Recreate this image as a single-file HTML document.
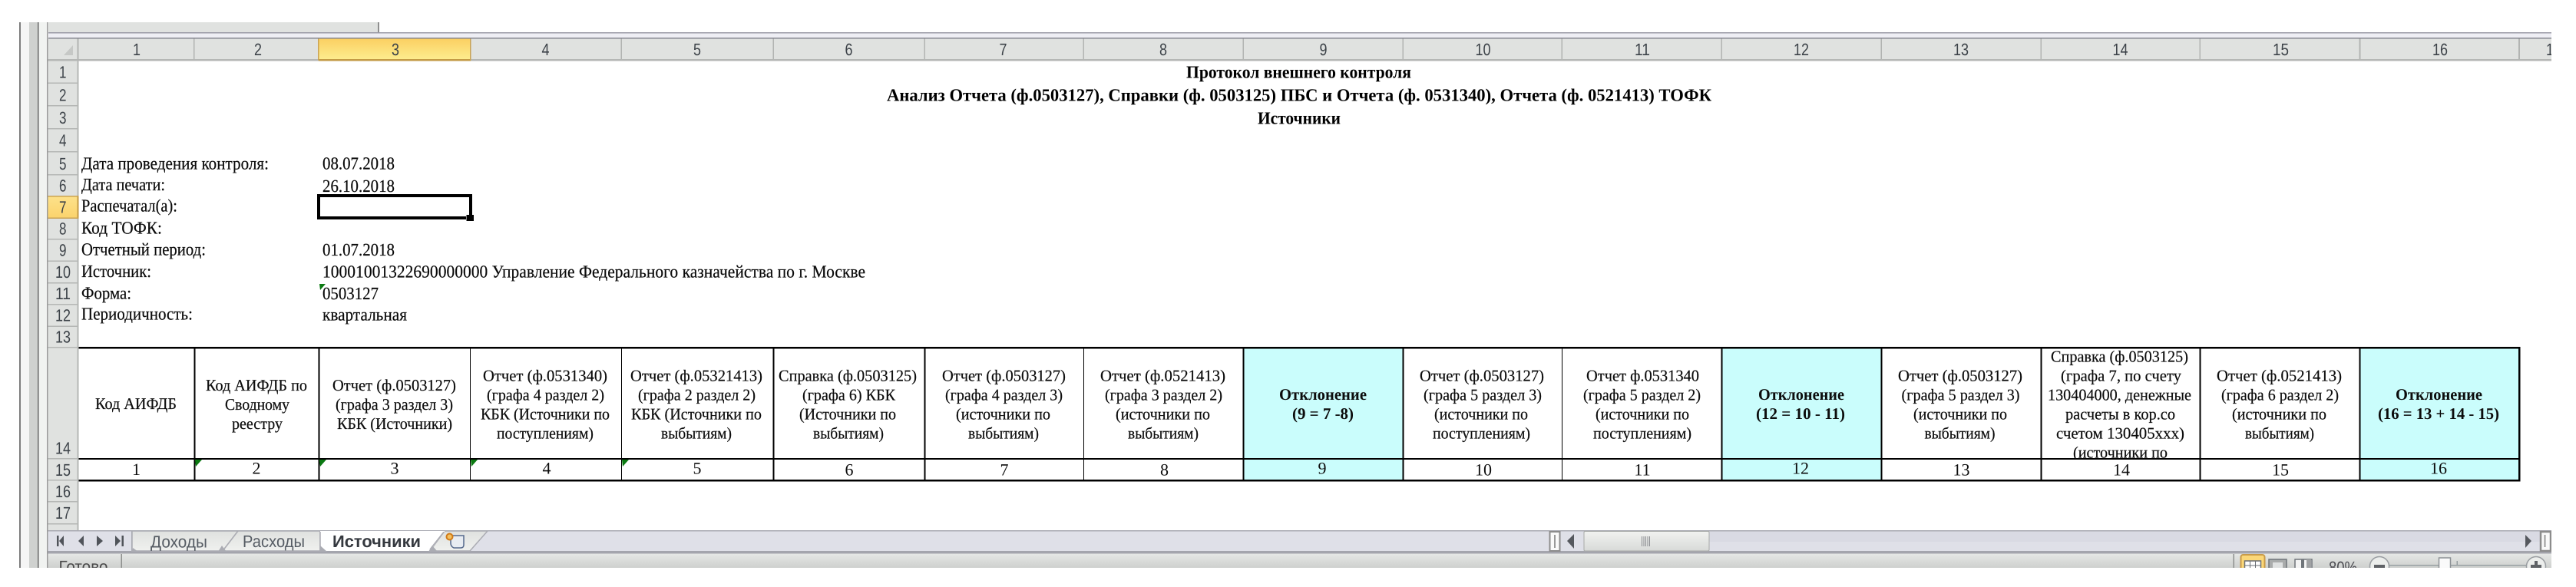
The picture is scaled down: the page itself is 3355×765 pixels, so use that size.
<!DOCTYPE html>
<html lang="ru"><head><meta charset="utf-8"><title>Источники</title>
<style>
html,body{margin:0;padding:0;background:#fff;width:3355px;height:765px;overflow:hidden}
svg{display:block;text-rendering:geometricPrecision}
.s{font-family:"Liberation Serif",serif;font-size:23px;fill:#0a0a0a;stroke:#0a0a0a;stroke-width:.2px}
.c{font-family:"Liberation Serif",serif;font-size:21px;fill:#0c0c0c;stroke:#0c0c0c;stroke-width:.2px}
.cb{font-family:"Liberation Serif",serif;font-size:21px;font-weight:bold;fill:#0c0c0c}
.h{font-family:"Liberation Serif",serif;font-size:23px;font-weight:bold;fill:#000}
.n{font-family:"Liberation Serif",serif;font-size:22px;fill:#0c0c0c;text-anchor:middle}
.d{font-family:"Liberation Sans",sans-serif;font-size:22px;fill:#3c4248}
.u{font-family:"Liberation Sans",sans-serif;font-size:22px;fill:#565c64}
</style></head><body>
<svg width="3355" height="765" viewBox="0 0 3355 765" xmlns="http://www.w3.org/2000/svg">
<defs>
<linearGradient id="act" x1="0" y1="0" x2="0" y2="1"><stop offset="0" stop-color="#fbd062"/><stop offset="1" stop-color="#fdec8e"/></linearGradient>
<linearGradient id="actr" x1="0" y1="0" x2="0" y2="1"><stop offset="0" stop-color="#fde18a"/><stop offset="1" stop-color="#fbd36c"/></linearGradient>
<linearGradient id="st" x1="0" y1="0" x2="0" y2="1"><stop offset="0" stop-color="#e6e8e6"/><stop offset="1" stop-color="#cdcfcd"/></linearGradient>
<linearGradient id="tb" x1="0" y1="0" x2="0" y2="1"><stop offset="0" stop-color="#dfe1df"/><stop offset="1" stop-color="#f0f1ef"/></linearGradient>
<linearGradient id="th" x1="0" y1="0" x2="0" y2="1"><stop offset="0" stop-color="#f1f2f0"/><stop offset="1" stop-color="#d8dad8"/></linearGradient>
<clipPath id="c14"><rect x="2659" y="453" width="205" height="144"/></clipPath>
<clipPath id="app"><rect x="0" y="0" width="3323" height="740"/></clipPath>
</defs>
<rect width="3355" height="765" fill="#fff"/>
<g clip-path="url(#app)">
<!-- left frame -->
<rect x="25" y="29" width="2" height="711" fill="#7d7d7d"/>
<rect x="27" y="29" width="11" height="711" fill="#f5f5f5"/>
<rect x="38" y="29" width="11" height="711" fill="#cfd1cf"/>
<rect x="49" y="29" width="1.5" height="711" fill="#666"/>
<rect x="50.500" y="29" width="10.500" height="711" fill="#f1f3f1"/>
<rect x="61" y="29" width="1.500" height="711" fill="#9a9a9a"/>
<!-- top area -->
<rect x="63" y="29" width="430" height="13" fill="#e0e2e0"/>
<rect x="492" y="29" width="2" height="13" fill="#8e8e8e"/>
<rect x="63" y="42" width="3260" height="1.500" fill="#9a9aa6"/>
<rect x="63" y="43.500" width="3260" height="5.500" fill="#eeeef4"/>
<rect x="63" y="49" width="3260" height="1.500" fill="#85858f"/>
<!-- column header -->
<rect x="62.500" y="50.500" width="3261" height="27" fill="#e0e2e0"/>
<rect x="62.500" y="77" width="3261" height="2.500" fill="#b5b7b5"/>
<rect x="415" y="50.500" width="198" height="27" fill="url(#act)"/>
<rect x="415" y="77" width="198" height="2.500" fill="#c39a45"/>
<rect x="414" y="50.500" width="1.500" height="28" fill="#c9a355"/>
<rect x="612" y="50.500" width="1.500" height="28" fill="#c9a355"/>
<g fill="#b2b4b2">
<rect x="100.500" y="50.500" width="2" height="27"/><rect x="252" y="50.500" width="1.500" height="27"/>
<rect x="808.500" y="50.500" width="1.500" height="27"/><rect x="1006.500" y="50.500" width="1.500" height="27"/><rect x="1203.500" y="50.500" width="1.500" height="27"/>
<rect x="1410.500" y="50.500" width="1.500" height="27"/><rect x="1618.500" y="50.500" width="1.500" height="27"/><rect x="1826.500" y="50.500" width="1.500" height="27"/>
<rect x="2033.500" y="50.500" width="1.500" height="27"/><rect x="2241.500" y="50.500" width="1.500" height="27"/><rect x="2449.500" y="50.500" width="1.500" height="27"/>
<rect x="2657.500" y="50.500" width="1.500" height="27"/><rect x="2864.500" y="50.500" width="1.500" height="27"/><rect x="3072.500" y="50.500" width="2" height="27"/><rect x="3280" y="50.500" width="2" height="27"/>
</g>
<polygon points="95,59 95,72 83,72" fill="#c6c8c6"/>
<g class="d">
<text class="d" x="173" y="72" textLength="10" lengthAdjust="spacingAndGlyphs">1</text>
<text class="d" x="331" y="72" textLength="10" lengthAdjust="spacingAndGlyphs">2</text>
<text class="d" x="510" y="72" textLength="10" lengthAdjust="spacingAndGlyphs">3</text>
<text class="d" x="705.500" y="72" textLength="10" lengthAdjust="spacingAndGlyphs">4</text>
<text class="d" x="903" y="72" textLength="10" lengthAdjust="spacingAndGlyphs">5</text>
<text class="d" x="1100.500" y="72" textLength="10" lengthAdjust="spacingAndGlyphs">6</text>
<text class="d" x="1301.500" y="72" textLength="10" lengthAdjust="spacingAndGlyphs">7</text>
<text class="d" x="1510" y="72" textLength="10" lengthAdjust="spacingAndGlyphs">8</text>
<text class="d" x="1718.500" y="72" textLength="10" lengthAdjust="spacingAndGlyphs">9</text>
<text class="d" x="1921.500" y="72" textLength="20" lengthAdjust="spacingAndGlyphs">10</text>
<text class="d" x="2129" y="72" textLength="20" lengthAdjust="spacingAndGlyphs">11</text>
<text class="d" x="2336" y="72" textLength="20" lengthAdjust="spacingAndGlyphs">12</text>
<text class="d" x="2544" y="72" textLength="20" lengthAdjust="spacingAndGlyphs">13</text>
<text class="d" x="2751.500" y="72" textLength="20" lengthAdjust="spacingAndGlyphs">14</text>
<text class="d" x="2960" y="72" textLength="21" lengthAdjust="spacingAndGlyphs">15</text>
<text class="d" x="3168" y="72" textLength="20" lengthAdjust="spacingAndGlyphs">16</text>
<text class="d" x="3316" y="72" textLength="20" lengthAdjust="spacingAndGlyphs">17</text>
</g>
<!-- row header -->
<rect x="62.500" y="79.500" width="38" height="612" fill="#e0e2e0"/>
<rect x="100.500" y="79.500" width="2" height="612" fill="#b5b7b5"/>
<rect x="62.500" y="256" width="39" height="28" fill="url(#actr)"/>
<rect x="100.500" y="255" width="2" height="30" fill="#c39a45"/>
<rect x="62.500" y="283.500" width="40" height="1.500" fill="#c9a355"/>
<rect x="62.500" y="255" width="40" height="1.500" fill="#c9a355"/>
<g fill="#b5b7b5">
<rect x="62.500" y="107.500" width="38" height="1.500"/><rect x="62.500" y="137" width="38" height="1.500"/><rect x="62.500" y="167" width="38" height="1.500"/><rect x="62.500" y="197" width="38" height="1.500"/><rect x="62.500" y="227" width="38" height="1.500"/>
<rect x="62.500" y="311" width="38" height="1.500"/><rect x="62.500" y="339.500" width="38" height="1.500"/><rect x="62.500" y="368" width="38" height="1.500"/><rect x="62.500" y="396" width="38" height="1.500"/><rect x="62.500" y="424.500" width="38" height="1.500"/><rect x="62.500" y="452" width="38" height="1.500"/>
<rect x="62.500" y="597" width="38" height="1.500"/><rect x="62.500" y="625" width="38" height="1.500"/><rect x="62.500" y="653" width="38" height="1.500"/><rect x="62.500" y="682" width="38" height="1.500"/>
</g>
<text class="d" x="77" y="101.500" textLength="9.500" lengthAdjust="spacingAndGlyphs">1</text>
<text class="d" x="77" y="131.500" textLength="9.500" lengthAdjust="spacingAndGlyphs">2</text>
<text class="d" x="77" y="161" textLength="9.500" lengthAdjust="spacingAndGlyphs">3</text>
<text class="d" x="77" y="190.500" textLength="9.500" lengthAdjust="spacingAndGlyphs">4</text>
<text class="d" x="77" y="221" textLength="9.500" lengthAdjust="spacingAndGlyphs">5</text>
<text class="d" x="77" y="249.500" textLength="9.500" lengthAdjust="spacingAndGlyphs">6</text>
<text class="d" x="77" y="277.500" textLength="9.500" lengthAdjust="spacingAndGlyphs">7</text>
<text class="d" x="77" y="305.500" textLength="9.500" lengthAdjust="spacingAndGlyphs">8</text>
<text class="d" x="77" y="333.500" textLength="9.500" lengthAdjust="spacingAndGlyphs">9</text>
<text class="d" x="72" y="362" textLength="20" lengthAdjust="spacingAndGlyphs">10</text>
<text class="d" x="72" y="390" textLength="20" lengthAdjust="spacingAndGlyphs">11</text>
<text class="d" x="72" y="418.500" textLength="20" lengthAdjust="spacingAndGlyphs">12</text>
<text class="d" x="72" y="446.500" textLength="20" lengthAdjust="spacingAndGlyphs">13</text>
<text class="d" x="72" y="591.500" textLength="20" lengthAdjust="spacingAndGlyphs">14</text>
<text class="d" x="72" y="620" textLength="20" lengthAdjust="spacingAndGlyphs">15</text>
<text class="d" x="72" y="648" textLength="20" lengthAdjust="spacingAndGlyphs">16</text>
<text class="d" x="72" y="676" textLength="20" lengthAdjust="spacingAndGlyphs">17</text>

<!-- titles -->
<text class="h" x="1545" y="101.700" textLength="293" lengthAdjust="spacingAndGlyphs">Протокол внешнего контроля</text>
<text class="h" x="1155" y="131.700" textLength="1074" lengthAdjust="spacingAndGlyphs">Анализ Отчета (ф.0503127), Справки (ф. 0503125) ПБС и Отчета (ф. 0531340), Отчета (ф. 0521413) ТОФК</text>
<text class="h" x="1638" y="161.700" textLength="108" lengthAdjust="spacingAndGlyphs">Источники</text>

<!-- labels -->
<text class="s" x="106" y="220.700" textLength="244" lengthAdjust="spacingAndGlyphs">Дата проведения контроля:</text>
<text class="s" x="106" y="248" textLength="109" lengthAdjust="spacingAndGlyphs">Дата печати:</text>
<text class="s" x="106" y="275.700" textLength="125" lengthAdjust="spacingAndGlyphs">Распечатал(а):</text>
<text class="s" x="106" y="304.300" textLength="105" lengthAdjust="spacingAndGlyphs">Код ТОФК:</text>
<text class="s" x="106" y="332.700" textLength="162" lengthAdjust="spacingAndGlyphs">Отчетный период:</text>
<text class="s" x="106" y="361" textLength="91" lengthAdjust="spacingAndGlyphs">Источник:</text>
<text class="s" x="106" y="389.300" textLength="65" lengthAdjust="spacingAndGlyphs">Форма:</text>
<text class="s" x="106" y="416.700" textLength="145" lengthAdjust="spacingAndGlyphs">Периодичность:</text>

<text class="s" x="420" y="220.700" textLength="94" lengthAdjust="spacingAndGlyphs">08.07.2018</text>
<text class="s" x="420" y="250" textLength="94" lengthAdjust="spacingAndGlyphs">26.10.2018</text>
<text class="s" x="420" y="333" textLength="94" lengthAdjust="spacingAndGlyphs">01.07.2018</text>
<text class="s" x="420" y="361.700" textLength="707" lengthAdjust="spacingAndGlyphs">10001001322690000000 Управление Федерального казначейства по г. Москве</text>
<text class="s" x="420" y="390" textLength="73" lengthAdjust="spacingAndGlyphs">0503127</text>
<text class="s" x="420" y="417.700" textLength="110" lengthAdjust="spacingAndGlyphs">квартальная</text>
<polygon points="416,370 424,370 417,378" fill="#0b7a12"/>

<!-- selection -->
<path d="M607 284 H415 V255 H613 V280" fill="none" stroke="#000" stroke-width="4"/>
<rect x="607.500" y="280" width="9.500" height="8" fill="#000"/>

<!-- table fills -->
<rect x="1619" y="453" width="208" height="173" fill="#cafdfc"/>
<rect x="2242" y="453" width="208" height="173" fill="#cafdfc"/>
<rect x="3073" y="453" width="208" height="173" fill="#cafdfc"/>

<!-- table header text -->
<text class="c" x="124" y="533" textLength="106" lengthAdjust="spacingAndGlyphs">Код АИФДБ</text>
<text class="c" x="268" y="509" textLength="132" lengthAdjust="spacingAndGlyphs">Код АИФДБ по</text>
<text class="c" x="293" y="534" textLength="84" lengthAdjust="spacingAndGlyphs">Сводному</text>
<text class="c" x="302" y="559" textLength="66" lengthAdjust="spacingAndGlyphs">реестру</text>

<text class="c" x="433" y="509" textLength="161" lengthAdjust="spacingAndGlyphs">Отчет (ф.0503127)</text>
<text class="c" x="437" y="534" textLength="153" lengthAdjust="spacingAndGlyphs">(графа 3 раздел 3)</text>
<text class="c" x="439" y="559" textLength="150" lengthAdjust="spacingAndGlyphs">КБК (Источники)</text>

<text class="c" x="629" y="496.700" textLength="162" lengthAdjust="spacingAndGlyphs">Отчет (ф.0531340)</text>
<text class="c" x="634" y="521.700" textLength="153" lengthAdjust="spacingAndGlyphs">(графа 4 раздел 2)</text>
<text class="c" x="626" y="546.700" textLength="168" lengthAdjust="spacingAndGlyphs">КБК (Источники по</text>
<text class="c" x="647" y="571.700" textLength="126" lengthAdjust="spacingAndGlyphs">поступлениям)</text>

<text class="c" x="821" y="496.700" textLength="172" lengthAdjust="spacingAndGlyphs">Отчет (ф.05321413)</text>
<text class="c" x="831" y="521.700" textLength="153" lengthAdjust="spacingAndGlyphs">(графа 2 раздел 2)</text>
<text class="c" x="822" y="546.700" textLength="170" lengthAdjust="spacingAndGlyphs">КБК (Источники по</text>
<text class="c" x="861" y="571.700" textLength="92" lengthAdjust="spacingAndGlyphs">выбытиям)</text>

<text class="c" x="1014" y="496.700" textLength="180" lengthAdjust="spacingAndGlyphs">Справка (ф.0503125)</text>
<text class="c" x="1045" y="521.700" textLength="121" lengthAdjust="spacingAndGlyphs">(графа 6) КБК</text>
<text class="c" x="1041" y="546.700" textLength="126" lengthAdjust="spacingAndGlyphs">(Источники по</text>
<text class="c" x="1059" y="571.700" textLength="92" lengthAdjust="spacingAndGlyphs">выбытиям)</text>

<text class="c" x="1227" y="496.700" textLength="161" lengthAdjust="spacingAndGlyphs">Отчет (ф.0503127)</text>
<text class="c" x="1231" y="521.700" textLength="153" lengthAdjust="spacingAndGlyphs">(графа 4 раздел 3)</text>
<text class="c" x="1245" y="546.700" textLength="123" lengthAdjust="spacingAndGlyphs">(источники по</text>
<text class="c" x="1261" y="571.700" textLength="92" lengthAdjust="spacingAndGlyphs">выбытиям)</text>

<text class="c" x="1433" y="496.700" textLength="163" lengthAdjust="spacingAndGlyphs">Отчет (ф.0521413)</text>
<text class="c" x="1439" y="521.700" textLength="153" lengthAdjust="spacingAndGlyphs">(графа 3 раздел 2)</text>
<text class="c" x="1453" y="546.700" textLength="123" lengthAdjust="spacingAndGlyphs">(источники по</text>
<text class="c" x="1469" y="571.700" textLength="92" lengthAdjust="spacingAndGlyphs">выбытиям)</text>

<text class="cb" x="1666" y="521" textLength="114" lengthAdjust="spacingAndGlyphs">Отклонение</text>
<text class="cb" x="1683" y="546" textLength="80" lengthAdjust="spacingAndGlyphs">(9 = 7 -8)</text>

<text class="c" x="1849" y="496.700" textLength="162" lengthAdjust="spacingAndGlyphs">Отчет (ф.0503127)</text>
<text class="c" x="1854" y="521.700" textLength="154" lengthAdjust="spacingAndGlyphs">(графа 5 раздел 3)</text>
<text class="c" x="1868" y="546.700" textLength="122" lengthAdjust="spacingAndGlyphs">(источники по</text>
<text class="c" x="1866" y="571.700" textLength="127" lengthAdjust="spacingAndGlyphs">поступлениям)</text>

<text class="c" x="2066" y="496.700" textLength="147" lengthAdjust="spacingAndGlyphs">Отчет ф.0531340</text>
<text class="c" x="2062" y="521.700" textLength="153" lengthAdjust="spacingAndGlyphs">(графа 5 раздел 2)</text>
<text class="c" x="2078" y="546.700" textLength="122" lengthAdjust="spacingAndGlyphs">(источники по</text>
<text class="c" x="2075" y="571.700" textLength="128" lengthAdjust="spacingAndGlyphs">поступлениям)</text>

<text class="cb" x="2290" y="521" textLength="112" lengthAdjust="spacingAndGlyphs">Отклонение</text>
<text class="cb" x="2287" y="546" textLength="116" lengthAdjust="spacingAndGlyphs">(12 = 10 - 11)</text>

<text class="c" x="2472" y="496.700" textLength="162" lengthAdjust="spacingAndGlyphs">Отчет (ф.0503127)</text>
<text class="c" x="2476.500" y="521.700" textLength="154" lengthAdjust="spacingAndGlyphs">(графа 5 раздел 3)</text>
<text class="c" x="2492" y="546.700" textLength="122" lengthAdjust="spacingAndGlyphs">(источники по</text>
<text class="c" x="2506.500" y="571.700" textLength="92" lengthAdjust="spacingAndGlyphs">выбытиям)</text>

<g clip-path="url(#c14)">
<text class="c" x="2671" y="471.700" textLength="179" lengthAdjust="spacingAndGlyphs">Справка (ф.0503125)</text>
<text class="c" x="2684" y="496.700" textLength="157" lengthAdjust="spacingAndGlyphs">(графа 7, по счету</text>
<text class="c" x="2667" y="521.700" textLength="187" lengthAdjust="spacingAndGlyphs">130404000, денежные</text>
<text class="c" x="2690" y="546.700" textLength="143" lengthAdjust="spacingAndGlyphs">расчеты в кор.со</text>
<text class="c" x="2678" y="571.700" textLength="167" lengthAdjust="spacingAndGlyphs">счетом 130405ххх)</text>
<text class="c" x="2700" y="596.700" textLength="123" lengthAdjust="spacingAndGlyphs">(источники по</text>
</g>

<text class="c" x="2887" y="496.700" textLength="163" lengthAdjust="spacingAndGlyphs">Отчет (ф.0521413)</text>
<text class="c" x="2893" y="521.700" textLength="153" lengthAdjust="spacingAndGlyphs">(графа 6 раздел 2)</text>
<text class="c" x="2907" y="546.700" textLength="123" lengthAdjust="spacingAndGlyphs">(источники по</text>
<text class="c" x="2924" y="571.700" textLength="90" lengthAdjust="spacingAndGlyphs">выбытиям)</text>

<text class="cb" x="3120" y="521" textLength="113" lengthAdjust="spacingAndGlyphs">Отклонение</text>
<text class="cb" x="3097" y="546" textLength="158" lengthAdjust="spacingAndGlyphs">(16 = 13 + 14 - 15)</text>

<!-- row 15 -->
<text class="n" x="177.500" y="619">1</text>
<text class="n" x="334" y="617.700">2</text>
<text class="n" x="514" y="617.700">3</text>
<text class="n" x="712" y="617.700">4</text>
<text class="n" x="908" y="617.700">5</text>
<text class="n" x="1106" y="619.500">6</text>
<text class="n" x="1308" y="619.500">7</text>
<text class="n" x="1516.500" y="619.500">8</text>
<text class="n" x="1722" y="617.700">9</text>
<text class="n" x="1932" y="619.700">10</text>
<text class="n" x="2139" y="619.700">11</text>
<text class="n" x="2345" y="617.700">12</text>
<text class="n" x="2554.500" y="619.700">13</text>
<text class="n" x="2763" y="619.700">14</text>
<text class="n" x="2970" y="619.700">15</text>
<text class="n" x="3176" y="617.700">16</text>

<!-- table borders -->
<g fill="#000">
<rect x="102.500" y="452" width="3180" height="2.500"/>
<rect x="102.500" y="597" width="3180" height="2"/>
<rect x="102.500" y="625" width="3180" height="2.500"/>
<rect x="252.500" y="453" width="2" height="174"/>
<rect x="414.500" y="453" width="2" height="174"/>
<rect x="612" y="453" width="1" height="174"/>
<rect x="809" y="453" width="1" height="174"/>
<rect x="1006.500" y="453" width="2" height="174"/>
<rect x="1203.500" y="453" width="2" height="174"/>
<rect x="1411" y="453" width="1" height="174"/>
<rect x="1618.500" y="453" width="2" height="174"/>
<rect x="1826.500" y="453" width="2" height="174"/>
<rect x="2034" y="453" width="1" height="174"/>
<rect x="2241.500" y="453" width="2" height="174"/>
<rect x="2449.500" y="453" width="2" height="174"/>
<rect x="2657.500" y="453" width="2" height="174"/>
<rect x="2864.500" y="453" width="2" height="174"/>
<rect x="3072.500" y="453" width="2" height="174"/>
<rect x="3280" y="452" width="2.500" height="175.500"/>
</g>
<g fill="#0b7a12">
<polygon points="254,599 263,599 255,608"/>
<polygon points="416,599 425,599 417,608"/>
<polygon points="613,599 622,599 614,608"/>
<polygon points="810,599 819,599 811,608"/>
</g>

<!-- tab bar -->
<rect x="62.500" y="691.500" width="3261" height="27" fill="#dfe0e8"/>
<rect x="2226" y="692" width="1097" height="14" fill="#d9dae3"/>
<rect x="62.500" y="691" width="3261" height="1.500" fill="#a9aab2"/>
<rect x="62.500" y="718" width="3261" height="3.500" fill="#a4a5ad"/>
<!-- nav -->
<g fill="#50545a">
<rect x="74" y="698" width="2.500" height="14"/><polygon points="83,698 83,712 77,705"/>
<polygon points="109,698 109,712 102,705"/>
<polygon points="126,698 126,712 134,705"/>
<polygon points="150,698 150,712 157,705"/><rect x="158.500" y="698" width="2.500" height="14"/>
</g>
<rect x="171" y="692" width="1.500" height="27" fill="#a9aab2"/>
<!-- tabs -->
<polygon points="172,692 310,692 290,718 172,718" fill="url(#tb)" stroke="#abacb3" stroke-width="1.500"/>
<polygon points="310,692 417,692 417,718 290,718" fill="url(#tb)" stroke="#abacb3" stroke-width="1.500"/>
<polygon points="635,692 579,692 560,718 612,718" fill="url(#tb)" stroke="#abacb3" stroke-width="1.500"/>
<polygon points="417,692 579,692 560,718 417,718" fill="#fff"/>
<path d="M417 692 V716 M579 692 L560 716" stroke="#abacb3" stroke-width="1.500" fill="none"/>
<rect x="417" y="692" width="162" height="1" fill="#fff"/>
<polygon points="416,719 426,719 417,711" fill="#abacb3"/>
<polygon points="284,719 295,719 289,711" fill="#abacb3"/>
<polygon points="558,719 570,719 563,711" fill="#abacb3"/>
<polygon points="172,719 180,719 173,714" fill="#abacb3"/>
<text class="u" x="196" y="713.300" textLength="74" lengthAdjust="spacingAndGlyphs">Доходы</text>
<text class="u" x="316" y="713" textLength="81" lengthAdjust="spacingAndGlyphs">Расходы</text>
<text class="u" x="433" y="713" textLength="115" lengthAdjust="spacingAndGlyphs" style="font-weight:bold;fill:#35393f">Источники</text>
<!-- insert sheet icon -->
<path d="M587 698 H604 V710 Q604 714 600 714 H591 Q587 712 587 708 Z" fill="#e8ecf2" stroke="#56698c" stroke-width="1.500"/>
<circle cx="585.500" cy="699.500" r="4" fill="#f4c060" stroke="#d07a18" stroke-width="2"/>
<!-- split & scrollbar -->
<rect x="2018.500" y="693" width="13" height="25" fill="#fafafa" stroke="#8c8c8c" stroke-width="2"/>
<rect x="2024" y="697" width="2" height="17" fill="#999"/>
<polygon points="2050,696 2050,715 2041,705" fill="#55585e"/>
<rect x="2063" y="692.500" width="163" height="25.500" rx="1.500" fill="url(#th)" stroke="#a8aaa8" stroke-width="1"/>
<g fill="#8a8c90"><rect x="2138" y="699" width="1" height="13"/><rect x="2140.500" y="699" width="1" height="13"/><rect x="2143" y="699" width="1" height="13"/><rect x="2145.500" y="699" width="1" height="13"/><rect x="2148" y="699" width="1" height="13"/></g>
<polygon points="3289,697 3289,714 3297,705" fill="#55585e"/>
<rect x="3309" y="693" width="13" height="25" fill="#fafafa" stroke="#8c8c8c" stroke-width="2.500"/>
<rect x="3313.500" y="697" width="2" height="16" fill="#999"/>

<!-- status bar -->
<rect x="62.500" y="721.500" width="3261" height="19" fill="url(#st)"/>
<text class="u" x="76.500" y="746" textLength="64" lengthAdjust="spacingAndGlyphs" style="fill:#4a4a4a">Готово</text>
<rect x="157.500" y="722" width="1.500" height="18" fill="#8d8f8d"/>
<rect x="2908.500" y="722" width="1.500" height="18" fill="#8d8f8d"/>
<rect x="2918.500" y="723" width="31" height="20" rx="3" fill="#fbd778" stroke="#c89a48" stroke-width="2"/>
<rect x="2923.500" y="731" width="21" height="12" fill="#fff" stroke="#6a6f74" stroke-width="1.500"/>
<path d="M2923.500 737 H2944.500 M2930.500 731 V743 M2937.500 731 V743" stroke="#6a6f74" stroke-width="1" fill="none"/>
<rect x="2955" y="729" width="23" height="14" fill="#a9abab" stroke="#70757a" stroke-width="1.500"/>
<rect x="2960" y="733" width="13" height="10" fill="#dfe1e1"/>
<rect x="2989" y="729" width="22" height="14" fill="#f4f4f4" stroke="#70757a" stroke-width="1.500"/>
<rect x="2997" y="729" width="4" height="14" fill="#70757a"/><rect x="3004" y="729" width="6" height="14" fill="#a0a2a4"/>
<text class="u" x="3033" y="747" textLength="37" lengthAdjust="spacingAndGlyphs" style="fill:#4a4a50">80%</text>
<rect x="3112" y="736" width="178" height="1.500" fill="#98a0a2"/>
<circle cx="3099" cy="738" r="12.500" fill="#eceeec" stroke="#9a9ea2" stroke-width="1.500"/>
<rect x="3092" y="736" width="14" height="4" fill="#5f6266"/>
<rect x="3176.500" y="727" width="15" height="14" fill="#fafafa" stroke="#8d9296" stroke-width="1.500"/>
<rect x="3199.500" y="731" width="1.500" height="6" fill="#98a0a2"/>
<circle cx="3303" cy="738" r="12.500" fill="#eceeec" stroke="#9a9ea2" stroke-width="1.500"/>
<rect x="3296" y="736" width="14" height="4" fill="#5f6266"/><rect x="3301" y="731" width="4" height="9" fill="#5f6266"/>
</g>
</svg>
</body></html>
